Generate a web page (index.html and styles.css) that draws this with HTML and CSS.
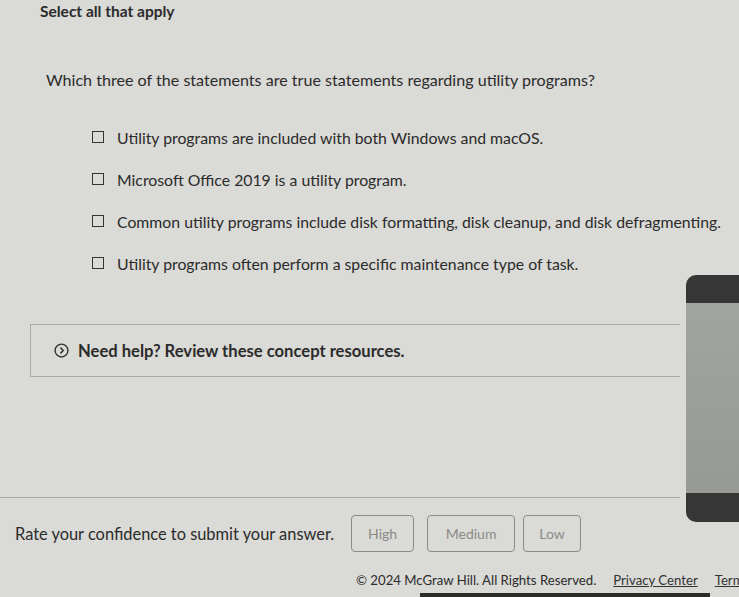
FILE: index.html
```html
<!DOCTYPE html>
<html lang="en">

<head>
  <meta charset="UTF-8">
  <meta name="viewport" content="width=device-width, initial-scale=1.0">
  <title>Select all that apply</title>
  <link rel="stylesheet" href="styles.css">
</head>

<body>
  <main class="page">
    <p class="prompt-title">Select all that apply</p>
    <p class="question">Which three of the statements are true statements regarding utility programs?</p>

    <ul class="choices">
      <li class="choice"><span class="box"></span>Utility programs are included with both Windows and macOS.</li>
      <li class="choice"><span class="box"></span>Microsoft Office 2019 is a utility program.</li>
      <li class="choice"><span class="box"></span>Common utility programs include disk formatting, disk cleanup, and disk defragmenting.</li>
      <li class="choice"><span class="box"></span>Utility programs often perform a specific maintenance type of task.</li>
    </ul>

    <section class="help">
      <svg class="help-icon" width="15" height="15" viewBox="0 0 14 14">
        <circle cx="7" cy="7" r="6" fill="none" stroke="#333" stroke-width="1.3" />
        <path d="M6 4.3 L8.6 7 L6 9.7" fill="none" stroke="#333" stroke-width="1.4" />
      </svg>
      <span>Need help? Review these concept resources.</span>
    </section>

    <div class="spacer"></div>

    <section class="confidence">
      <span class="rate-label">Rate your confidence to submit your answer.</span>
      <button class="rate-btn high">High</button>
      <button class="rate-btn medium">Medium</button>
      <button class="rate-btn low">Low</button>
    </section>

    <footer class="footer">
      <span>© 2024 McGraw Hill. All Rights Reserved.</span>
      <a href="#">Privacy Center</a>
      <a href="#">Terms</a>
    </footer>
  </main>

  <!-- the phone lying over the screen at the right edge -->
  <div class="device">
    <div class="device-screen"></div>
  </div>
  <div class="bottom-strip"></div>
</body>

</html>
```

FILE: styles.css
```css
html,
body {
  height: 100%;
  overflow: hidden;
}

body {
  background: #dadad6;
  color: #2b2b2b;
  font-family: Lato, "Open Sans", sans-serif;
  margin: 0;
}

.page {
  position: relative;
  width: 739px;
}

.prompt-title {
  font-size: 15.5px;
  font-weight: 700;
  line-height: 20px;
  margin: 0;
  padding: 1px 0 0 40px;
}

.question {
  font-size: 16.1px;
  line-height: 20px;
  margin: 49px 0 0 46px;
}

.choices {
  list-style: none;
  margin: 26px 0 0 0;
  padding: 0 0 0 92px;
}

.choice {
  align-items: center;
  display: flex;
  font-size: 15.8px;
  height: 42px;
}

.box {
  border: 1.5px solid #333;
  box-sizing: border-box;
  display: inline-block;
  height: 12px;
  margin-right: 13px;
  width: 12px;
}

.help {
  align-items: center;
  border: 1px solid #a9a9a5;
  border-right: none;
  box-sizing: border-box;
  display: flex;
  font-size: 16.6px;
  font-weight: 700;
  gap: 9px;
  height: 53px;
  margin: 40px 0 0 30px;
  padding-left: 23px;
  width: 650px;
}

.spacer {
  border-bottom: 1px solid #a9a9a5;
  height: 120px;
  width: 680px;
}

.confidence {
  align-items: center;
  display: flex;
  margin-top: 17px;
  padding-left: 15px;
}

.rate-label {
  font-size: 16.4px;
  margin-right: 17px;
}

.rate-btn {
  background: transparent;
  border: 1.5px solid #8a8a88;
  border-radius: 4px;
  color: #8a8a88;
  font-family: Lato, "Open Sans", sans-serif;
  font-size: 14px;
  height: 37px;
}

.high {
  margin-right: 13px;
  width: 63px;
}

.medium {
  margin-right: 8px;
  width: 88px;
}

.low {
  width: 58px;
}

.footer {
  display: flex;
  font-size: 13.2px;
  gap: 17px;
  margin-top: 20px;
  padding-left: 356px;
  white-space: nowrap;
}

.footer a {
  color: #333;
}

.device {
  background: #363636;
  border-radius: 10px 0 0 10px;
  height: 247px;
  left: 686px;
  position: absolute;
  top: 275px;
  width: 60px;
}

.device-screen {
  background: linear-gradient(#a2a4a0, #979995);
  height: 190px;
  margin-top: 28px;
}

.bottom-strip {
  background: #2e2c28;
  height: 4px;
  left: 420px;
  position: absolute;
  top: 593px;
  width: 290px;
}
```
